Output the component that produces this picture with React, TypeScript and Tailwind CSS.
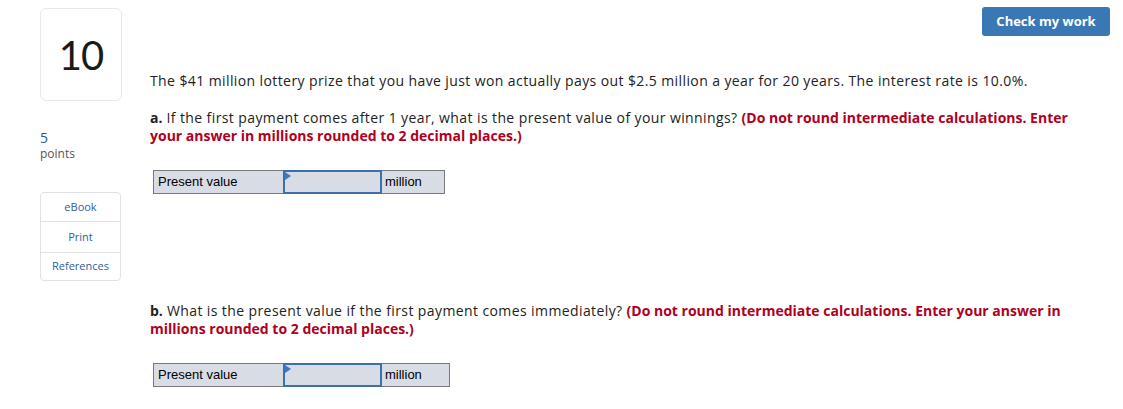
import React from "react";

const AnswerRow: React.FC<{ unitWidth: string }> = ({ unitWidth }) => (
  <div className="flex h-[24px] text-[13px] text-black tracking-normal" style={{ fontFamily: '"Liberation Sans", Arial, sans-serif' }}>
    <div className="w-[131px] bg-[#d8dce5] border border-[#7a7a7a] pl-[4px] flex items-center">Present value</div>
    <div className="relative w-[99px] bg-[#d8dce5] border-2 border-[#3d6fa8] -ml-px">
      <span className="absolute left-0 top-0 w-0 h-0 border-t-[4px] border-b-[4px] border-l-[6px] border-t-transparent border-b-transparent border-l-[#3d78c0]" />
    </div>
    <div className={`${unitWidth} bg-[#d8dce5] border border-[#7a7a7a] border-l-0 pl-[3px] flex items-center`}>million</div>
  </div>
);

const App: React.FC = () => {
  return (
    <div className="w-[1123px] h-[409px] bg-white relative text-[#222]" style={{ fontFamily: '"Open Sans", Lato, sans-serif' }}>
      <div className="flex">
        {/* Left rail */}
        <aside className="w-[150px] shrink-0 pl-[40px] pt-[8px]">
          <div className="w-[82px] h-[93px] border border-[#e8e8e8] rounded-[6px] flex items-center justify-center text-[40px] text-[#1a1a1a] tracking-tight" style={{ fontFamily: 'Lato, sans-serif' }}>
            10
          </div>
          <div className="mt-[29px] text-[14px] leading-[16px] text-[#1f5596]">5</div>
          <div className="text-[12px] leading-[16px] text-[#555]">points</div>
          <div className="mt-[30px] w-[81px] border border-[#e2e2e2] rounded-[4px] text-[11px] text-[#2f5f99] text-center">
            <div className="h-[29px] flex items-center justify-center border-b border-[#e2e2e2]">eBook</div>
            <div className="h-[31px] flex items-center justify-center border-b border-[#e2e2e2]">Print</div>
            <div className="h-[27px] flex items-center justify-center">References</div>
          </div>
        </aside>

        {/* Question body */}
        <main className="w-[935px] pt-[72px] text-[14px] leading-[18px] tracking-[0.4px]">
          <p>
            The $41 million lottery prize that you have just won actually pays out $2.5 million a year for 20 years. The interest rate is 10.0%.
          </p>
          <p className="mt-[19px]">
            <b className="tracking-normal">a.</b> If the first payment comes after 1 year, what is the present value of your winnings?{" "}
            <b className="text-[#b0001e] tracking-normal">(Do not round intermediate calculations. Enter your answer in millions rounded to 2 decimal places.)</b>
          </p>
          <div className="mt-[25px] pl-[3px]">
            <AnswerRow unitWidth="w-[63px]" />
          </div>
          <p className="mt-[108px]">
            <b className="tracking-normal">b.</b> What is the present value if the first payment comes immediately?{" "}
            <b className="text-[#b0001e] tracking-normal">(Do not round intermediate calculations. Enter your answer in millions rounded to 2 decimal places.)</b>
          </p>
          <div className="mt-[25px] pl-[3px]">
            <AnswerRow unitWidth="w-[68px]" />
          </div>
        </main>
      </div>

      <button className="absolute left-[982px] top-[7px] w-[128px] h-[29px] rounded-[3px] bg-[#3a77b5] text-white text-[13px] font-bold">
        Check my work
      </button>
    </div>
  );
};

export default App;
